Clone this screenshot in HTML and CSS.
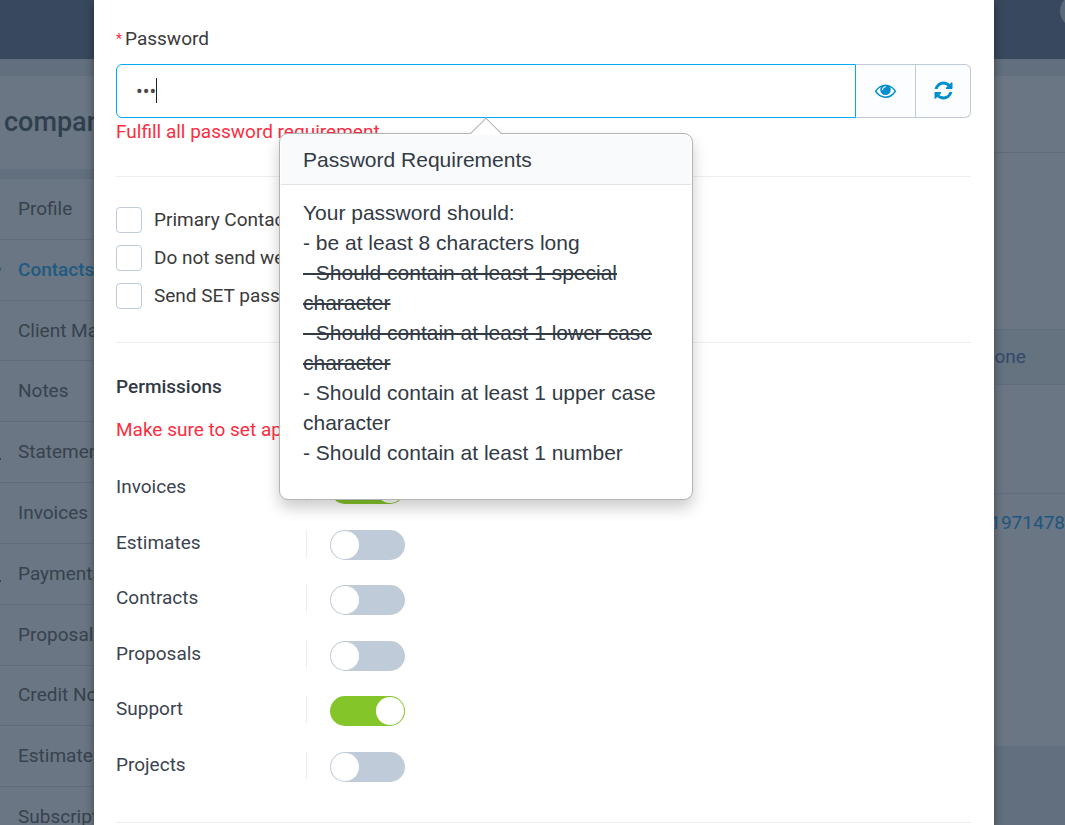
FILE: index.html
```
<!DOCTYPE html>
<html lang="en">
<head>
  <meta charset="utf-8">
  <title>Contact</title>
  <link rel="stylesheet" href="styles.css">
</head>
<body>
  <div class="app">
    <header class="topbar"><span class="avatar"></span></header>
    <div class="columns">
      <aside class="sidebar">
        <div class="company">company</div>
        <nav class="tabs">
          <a href="#">Profile</a>
          <a href="#" class="active">
            <svg class="tab-icon" viewBox="0 0 18 18"><circle cx="9" cy="5" r="4"/><path d="M1 17v-4q0-3 3-3h10q3 0 3 3z"/><circle cx="16" cy="8" r="2"/></svg>
            Contacts</a>
          <a href="#">Client Map</a>
          <a href="#">Notes</a>
          <a href="#">
            <svg class="tab-icon" viewBox="0 0 18 18"><path d="M0 1h2v14h16v2H0z"/></svg>
            Statement</a>
          <a href="#">Invoices</a>
          <a href="#">
            <svg class="tab-icon" viewBox="0 0 18 18"><path d="M2 15h16v2H2zM4 2h13v6H4z"/></svg>
            Payments</a>
          <a href="#">Proposals</a>
          <a href="#">Credit Notes</a>
          <a href="#">Estimates</a>
          <a href="#">Subscriptions</a>
        </nav>
      </aside>
      <main class="content">
        <div class="content-head"></div>
        <table class="contacts">
          <thead><tr><th>Phone</th></tr></thead>
          <tbody>
            <tr><td></td></tr>
            <tr><td><a href="#">1971478</a></td></tr>
          </tbody>
        </table>
      </main>
    </div>
  </div>

  <div class="overlay">
    <form class="modal" role="dialog" aria-label="Contact">
      <label class="field-label" for="password"><small class="req">*</small>Password</label>
      <div class="input-group">
        <div class="input-wrap">
          <input type="password" id="password" class="form-control" value="abc">
          <span class="caret"></span>
          <div class="popover" role="tooltip">
            <span class="arrow"></span>
            <h3 class="popover-title">Password Requirements</h3>
            <div class="popover-content">
              Your password should:<br>
              - be at least 8 characters long<br>
              <s>- Should contain at least 1 special character</s><br>
              <s>- Should contain at least 1 lower case character</s><br>
              - Should contain at least 1 upper case character<br>
              - Should contain at least 1 number
            </div>
          </div>
        </div>
        <button type="button" class="addon" aria-label="Show password">
          <svg viewBox="0 0 1792 1792"><path d="M1664 960q-152-236-381-353 61 104 61 225 0 185-131.500 316.500t-316.500 131.500-316.500-131.500-131.500-316.500q0-121 61-225-229 117-381 353 133 205 333.500 326.500t434.500 121.500 434.500-121.500 333.500-326.500zm-720-384q0-20-14-34t-34-14q-125 0-214.500 89.500t-89.500 214.500q0 20 14 34t34 14 34-14 14-34q0-86 61-147t147-61q20 0 34-14t14-34zm848 384q0 34-20 69-140 230-376.500 368.500t-499.500 138.500-499.500-139-376.500-368q-20-35-20-69t20-69q140-229 376.500-368t499.500-139 499.500 139 376.500 368q20 35 20 69z"/></svg>
        </button>
        <button type="button" class="addon addon-last" aria-label="Generate password">
          <svg viewBox="0 0 1792 1792"><path d="M1639 1056q0 5-1 7-64 268-268 434.500t-478 166.500q-146 0-282.500-55t-243.500-157l-129 129q-19 19-45 19t-45-19-19-45v-448q0-26 19-45t45-19h448q26 0 45 19t19 45-19 45l-137 137q71 66 161 102t187 36q134 0 250-65t186-179q11-17 53-117 8-23 30-23h192q13 0 22.500 9.500t9.500 22.500zm25-800v448q0 26-19 45t-45 19h-448q-26 0-45-19t-19-45 19-45l138-138q-148-137-349-137-134 0-250 65t-186 179q-11 17-53 117-8 23-30 23h-199q-13 0-22.500-9.500t-9.500-22.500v-7q65-268 270-434.500t480-166.500q146 0 284 55.500t245 156.500l130-129q19-19 45-19t45 19 19 45z"/></svg>
        </button>
      </div>
      <p class="text-danger">Fulfill all password requirement</p>
      <hr>
      <div class="checks">
        <label class="check"><input type="checkbox">Primary Contact</label>
        <label class="check"><input type="checkbox">Do not send welcome email</label>
        <label class="check"><input type="checkbox">Send SET password email</label>
      </div>
      <hr>
      <h4 class="heading">Permissions</h4>
      <p class="text-danger">Make sure to set appropriate permissions for this contact</p>
      <div class="permissions">
        <div class="permission"><label for="p1">Invoices</label><input type="checkbox" class="switch" id="p1" checked></div>
        <div class="permission"><label for="p2">Estimates</label><input type="checkbox" class="switch" id="p2"></div>
        <div class="permission"><label for="p3">Contracts</label><input type="checkbox" class="switch" id="p3"></div>
        <div class="permission"><label for="p4">Proposals</label><input type="checkbox" class="switch" id="p4"></div>
        <div class="permission"><label for="p5">Support</label><input type="checkbox" class="switch" id="p5" checked></div>
        <div class="permission"><label for="p6">Projects</label><input type="checkbox" class="switch" id="p6"></div>
      </div>
      <hr class="hr-last">
    </form>
  </div>
</body>
</html>
```
FILE: styles.css
```
* {
  box-sizing: border-box;
}

body {
  margin: 0;
  height: 100vh;
  overflow: hidden;
  font-family: Roboto, "Liberation Sans", sans-serif;
  font-size: 19px;
  line-height: 28px;
  color: #3a3a3a;
  background: #626f7e;
}

a {
  text-decoration: none;
}

/* dimmed page */
.topbar {
  display: flex;
  justify-content: flex-end;
  height: 59px;
  background: #38485e;
  overflow: hidden;
}
.avatar {
  width: 34px;
  height: 34px;
  margin: -6px -29px 0 0;
  border-radius: 50%;
  background: #5b6a7a;
}
.columns {
  display: flex;
  justify-content: space-between;
  align-items: flex-start;
  padding-top: 17px;
}
.sidebar {
  width: 130px;
}
.company {
  height: 93px;
  padding: 32px 4px;
  background: #6a7683;
  color: #303f4e;
  font-size: 27px;
  font-weight: 500;
}
.tabs {
  display: grid;
  grid-auto-rows: 1fr;
  height: 670px;
  margin-top: 9px;
  border-top: 1px solid #5e6b79;
  background: #6a7683;
}
.tabs a {
  display: flex;
  align-items: center;
  padding-left: 18px;
  border-bottom: 1px solid #5e6b79;
  color: #37424e;
  white-space: nowrap;
}
.tabs .active {
  color: #205a80;
  font-weight: 500;
}
.tab-icon {
  width: 18px;
  height: 18px;
  margin-left: -35px;
  margin-right: 17px;
  fill: currentColor;
}
.content {
  width: 97px;
  height: 670px;
  background: #6a7683;
}
.content-head {
  height: 77px;
  border-bottom: 1px solid #5e6b79;
}
.contacts {
  width: 100%;
  margin-top: 176px;
  border-collapse: collapse;
}
.contacts th {
  height: 55px;
  padding: 0 4px;
  background: #65727f;
  border-top: 1px solid #606d7c;
  border-bottom: 1px solid #606d7c;
  color: #34486b;
  font-weight: 400;
  text-align: left;
}
.contacts td {
  height: 109px;
  padding: 15px 0;
  border-bottom: 1px solid #606d7c;
  text-align: right;
  vertical-align: top;
}
.contacts tr:last-child td {
  border-bottom: none;
}
.contacts a {
  color: #1d5680;
}

/* modal */
.overlay {
  position: absolute;
  inset: 0;
  padding: 0 71px 0 94px;
  overflow: hidden;
}
.modal {
  min-height: 100%;
  padding: 25px 23px 0 22px;
  background: #fff;
  box-shadow: 0 3px 9px rgba(0, 0, 0, 0.4);
}
.field-label {
  display: flex;
  gap: 3px;
  margin-bottom: 11px;
}
.req {
  color: #fc2d42;
  font-size: 14px;
}
.input-group {
  display: flex;
  height: 54px;
}
.input-wrap {
  position: relative;
  flex: 1;
}
.form-control {
  width: 100%;
  height: 100%;
  padding: 0 19px;
  border: 1px solid #03a9f4;
  border-radius: 6px 0 0 6px;
  outline: none;
  font: inherit;
  font-size: 20px;
  color: #494949;
}
.caret {
  position: absolute;
  left: 40px;
  top: 14px;
  width: 1px;
  height: 25px;
  background: #222;
}
.addon {
  display: flex;
  align-items: center;
  justify-content: center;
  width: 60px;
  padding: 0 0 2px;
  border: 1px solid #bfcbd9;
  border-left: none;
  background: #fbfdff;
  cursor: pointer;
}
.addon-last {
  width: 55px;
  border-radius: 0 6px 6px 0;
}
.addon svg {
  width: 21px;
  height: 21px;
  fill: #008ece;
}
.text-danger {
  margin: 0;
  color: #fc2d42;
}
hr {
  margin: 30px 0;
  border: none;
  border-top: 1px solid #eee;
}
.checks {
  display: grid;
  gap: 12px;
  margin-bottom: 33px;
}
.check {
  display: flex;
  align-items: center;
  gap: 12px;
  height: 26px;
}
.check input {
  appearance: none;
  width: 26px;
  height: 26px;
  margin: 0;
  border: 1px solid #bfcbd9;
  border-radius: 4px;
  background: #fff;
}
.heading {
  margin: 0 0 15px;
  color: #323a45;
  font-size: 19px;
  font-weight: 500;
}
.permissions {
  display: grid;
  grid-auto-rows: 1fr;
  height: 333px;
  margin-top: 30px;
}
.permission {
  display: flex;
  align-items: flex-start;
}
.permission label {
  width: 191px;
  height: 28px;
  border-right: 1px solid #eee;
  color: #3b4350;
  line-height: 26px;
}
.hr-last {
  margin-top: 15px;
}

/* on/off switch */
.switch {
  appearance: none;
  display: flex;
  width: 75px;
  height: 30px;
  margin: 0 0 0 23px;
  padding: 1px;
  border-radius: 15px;
  background: #bfcbd9;
  cursor: pointer;
}
.switch::before {
  content: "";
  width: 28px;
  height: 28px;
  border-radius: 50%;
  background: #fff;
}
.switch:checked {
  justify-content: flex-end;
  background: #84c529;
}

/* popover */
.popover {
  position: absolute;
  top: 69px;
  left: 50%;
  width: 414px;
  margin-left: -207px;
  padding: 1px;
  border: 1px solid #b3b3b3;
  border-radius: 9px;
  background: #fff;
  box-shadow: 0 8px 15px rgba(0, 0, 0, 0.2);
  font-family: "Liberation Sans", Arial, sans-serif;
  font-size: 21px;
  line-height: 30px;
  color: #323a45;
}
.arrow {
  position: absolute;
  top: -12px;
  left: 50%;
  width: 22px;
  height: 22px;
  margin-left: -11px;
  border: 1px solid #b3b3b3;
  border-right: none;
  border-bottom: none;
  background: #fff;
  transform: rotate(45deg);
}
.popover-title {
  position: relative;
  margin: 0;
  padding: 10px 22px 9px;
  border-bottom: 1px solid #e0e3e7;
  border-radius: 7px 7px 0 0;
  background: #f9fafc;
  font-size: 21px;
  font-weight: 400;
}
.popover-content {
  padding: 13px 22px 30px;
}
```
